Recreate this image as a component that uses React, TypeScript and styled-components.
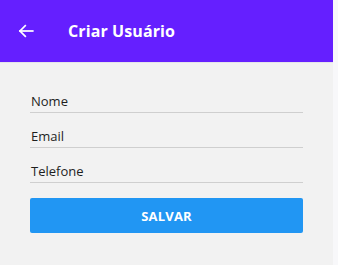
import React from 'react';
import styled, { createGlobalStyle } from 'styled-components';

const GlobalStyle = createGlobalStyle`
  html, body {
    margin: 0;
    padding: 0;
    background: #f7f7f9;
  }
  body {
    font-family: 'Open Sans', 'Noto Sans', sans-serif;
  }
`;

const Frame = styled.div`
  display: flex;
  flex-direction: row;
  width: 338px;
  height: 265px;
  overflow: hidden;
`;

const Page = styled.div`
  width: 333px;
  display: flex;
  flex-direction: column;
  background: #f2f2f2;
`;

const Gutter = styled.div`
  flex: 1;
  background: #f8f8fa;
`;

const Toolbar = styled.header`
  height: 62px;
  background: #651fff;
  display: flex;
  align-items: center;
  padding-left: 16px;
  border-bottom: 1px solid #e4e4ea;
`;

const BackButton = styled.button`
  background: none;
  border: none;
  padding: 0;
  width: 20px;
  height: 20px;
  display: flex;
  align-items: center;
  justify-content: center;
  color: #fff;
  cursor: pointer;
`;

const Title = styled.h1`
  margin: 0 0 0 32px;
  font-size: 16px;
  font-weight: 700;
  color: #fff;
  letter-spacing: 0.1px;
`;

const Form = styled.form`
  display: flex;
  flex-direction: column;
  padding: 28px 30px 0 30px;
`;

const Field = styled.label`
  display: block;
  height: 21px;
  margin-bottom: 13px;
  border-bottom: 1px solid #cfcfcf;
  font-size: 13px;
  line-height: 20px;
  color: #1e1e1e;
  padding-left: 1px;
`;

const SaveButton = styled.button`
  margin-top: 2px;
  height: 35px;
  border: none;
  border-radius: 2px;
  background: #2196f3;
  color: #fff;
  font-family: 'Open Sans', 'Noto Sans', sans-serif;
  font-size: 13px;
  font-weight: 700;
  letter-spacing: 0.2px;
  cursor: pointer;
`;

const ArrowLeft = () => (
  <svg width="18" height="18" viewBox="0 0 24 24" fill="none" stroke="currentColor" strokeWidth="2.3" strokeLinecap="square">
    <path d="M21 12H4" />
    <path d="M11 5l-7 7 7 7" />
  </svg>
);

const App: React.FC = () => {
  const fields = ['Nome', 'Email', 'Telefone'];

  return (
    <>
      <GlobalStyle />
      <Frame>
        <Page>
          <Toolbar>
            <BackButton aria-label="Voltar">
              <ArrowLeft />
            </BackButton>
            <Title>Criar Usuário</Title>
          </Toolbar>
          <Form onSubmit={(e) => e.preventDefault()}>
            {fields.map((f) => (
              <Field key={f}>{f}</Field>
            ))}
            <SaveButton type="submit">SALVAR</SaveButton>
          </Form>
        </Page>
        <Gutter />
      </Frame>
    </>
  );
};

export default App;
